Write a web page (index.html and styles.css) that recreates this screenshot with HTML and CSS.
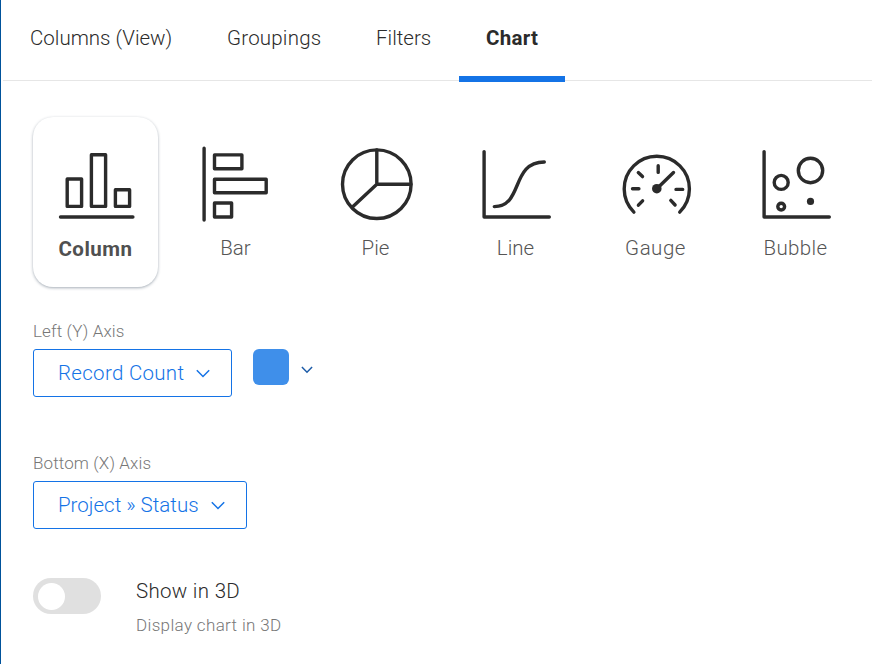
FILE: index.html
```html
<!DOCTYPE html>
<html lang="en">
<head>
<meta charset="utf-8">
<title>Chart settings</title>
<link rel="stylesheet" href="styles.css">
</head>
<body>
<main class="panel">
  <nav class="tabs">
    <a class="tab tab-columns"><span>Columns (View)</span></a>
    <a class="tab tab-groupings"><span>Groupings</span></a>
    <a class="tab tab-filters"><span>Filters</span></a>
    <a class="tab tab-chart active"><span>Chart</span></a>
  </nav>
  <section class="types">
    <div class="type selected">
      <svg class="icon" viewBox="55.5 145 80 80"><path d="M66.7 179h14.4v27.4H66.7zM90.9 154.7h14.2v51.7H90.9zM114.9 189.7h14.2v16.7h-14.2zM60 217h72.4"/></svg>
      <span class="name n-column">Column</span>
    </div>
    <div class="type">
      <svg class="icon" viewBox="195.500 145 80 80"><path d="M203.6 148.3v71.8M214 154.9h27.4v13.9H214zM214 179.3h51.7v13.5H214zM214 203h17.1v14H214z"/></svg>
      <span class="name n-bar">Bar</span>
    </div>
    <div class="type">
      <svg class="icon" viewBox="335.5 145 80 80"><circle cx="376.3" cy="184.2" r="34.3"/><path d="M376.3 150v34.2h34M376.3 184.2l-24.6 23.1"/></svg>
      <span class="name n-pie">Pie</span>
    </div>
    <div class="type">
      <svg class="icon" viewBox="475.5 145 80 80"><path d="M483.6 151.6V217h65.2M493.8 206.6C523 206.6 510 162 543.8 162"/></svg>
      <span class="name n-line">Line</span>
    </div>
    <div class="type">
      <svg class="icon" viewBox="615.5 145 80 80"><path d="M633.4 212.1a32.6 32.6 0 1 1 45.8 0M656.3 188.7l16.7-16.2M657.7 165.7v6.7M637.8 172.6l4.2 4M632 188.7h6.4M637.9 205.2l4.2-4.4M675.5 189.4h6.7M670.3 200.4l4.3 4.6"/><circle class="fill" cx="656.3" cy="188.7" r="4.8"/></svg>
      <span class="name n-gauge">Gauge</span>
    </div>
    <div class="type">
      <svg class="icon" viewBox="755.5 145 80 80"><path d="M763.6 151.6V217h65.2"/><circle cx="780.7" cy="182.4" r="7"/><circle cx="810" cy="170.5" r="12.2"/><circle cx="780.7" cy="206.6" r="3.4"/><circle class="fill" cx="810" cy="201.4" r="3.6"/></svg>
      <span class="name n-bubble">Bubble</span>
    </div>
  </section>
  <section class="field">
    <label class="caption c-left">Left (Y) Axis</label>
    <div class="row">
      <button class="select s-count"><span>Record Count</span><svg class="chev" viewBox="0 0 14 9"><path d="M.8 1.2 7 7.5l6.2-6.3"/></svg></button>
      <div class="swatch"></div>
      <svg class="chev small" viewBox="0 0 12 8"><path d="M.9 1 6 6.2 11.1 1"/></svg>
    </div>
  </section>
  <section class="field second">
    <label class="caption c-bottom">Bottom (X) Axis</label>
    <div class="row">
      <button class="select s-status"><span>Project » Status</span><svg class="chev" viewBox="0 0 14 9"><path d="M.8 1.2 7 7.5l6.2-6.3"/></svg></button>
    </div>
  </section>
  <section class="option">
    <div class="toggle"><div class="knob"></div></div>
    <div class="text">
      <div class="title">Show in 3D</div>
      <div class="hint">Display chart in 3D</div>
    </div>
  </section>
</main>
</body>
</html>
```
FILE: styles.css
```css
* { box-sizing: border-box; }
body { margin: 0; background: #fff; font-family: Roboto, "Liberation Sans", sans-serif; }
.panel { height: 664px; border-left: 1px solid #00529b; overflow: hidden; }
.tabs { display: flex; height: 81px; margin-left: 2px; border-bottom: 1px solid #e6e6e6; }
.tab { height: 82px; padding: 24px 0 0 27px; font-size: 20.5px; line-height: 28px; font-weight: 350; color: #2b2b2b; white-space: nowrap; }
.tab-columns { width: 197px; }
.tab-groupings { width: 149px; letter-spacing: .2px; }
.tab-filters { width: 110px; }
.tab-chart { width: 106px; letter-spacing: .3px; }
.active { font-weight: 700; border-bottom: 6px solid #1473e6; }
.types { display: flex; gap: 15px; margin: 36px 0 0 32px; }
.type { flex: none; width: 125px; height: 170px; padding-top: 28px; display: flex; flex-direction: column; align-items: center; border-radius: 20px; }
.selected { box-shadow: 0 1px 3px rgba(40, 60, 80, .42); }
.icon { width: 80px; height: 80px; fill: none; stroke: #2b2b2b; stroke-width: 3.4; stroke-linecap: round; stroke-linejoin: round; }
.fill { fill: #2b2b2b; stroke: none; }
.name { margin-top: 9px; font-size: 20.5px; line-height: 28px; font-weight: 350; color: #555; }
.n-gauge { letter-spacing: .5px; }
.n-bubble { letter-spacing: .4px; }
.selected .name { margin-top: 10px; font-weight: 700; color: #505050; letter-spacing: .5px; }
.field { margin: 33px 0 0 32px; }
.caption { display: block; width: max-content; height: 29px; font-size: 17px; line-height: 22px; font-weight: 350; color: #777; letter-spacing: .12px; }
.row { display: flex; align-items: flex-start; }
.select { height: 48px; padding: 0 21px 0 24px; display: flex; align-items: center; justify-content: space-between; border: 1px solid #1473e6; border-radius: 3px; background: #fff; color: #1473e6; font: 350 20.5px/28px Roboto, "Liberation Sans", sans-serif; white-space: nowrap; }
.s-count { width: 199px; letter-spacing: .3px; }
.s-status { width: 214px; }
.chev { width: 14px; height: 9px; fill: none; stroke: #1473e6; stroke-width: 1.5; }
.small { width: 12px; height: 8px; margin: 17px 0 0 12px; stroke: #1d5ca8; }
.swatch { width: 36px; height: 36px; margin-left: 21px; border-radius: 6px; background: #3f8fea; }
.second { margin-top: 55px; }
.option { display: flex; margin: 49px 0 0 32px; }
.toggle { width: 68px; height: 36px; padding: 5px; border-radius: 18px; background: #e0e0e0; }
.knob { width: 27px; height: 27px; border-radius: 50%; background: #fff; }
.text { margin: -1px 0 0 35px; }
.title { width: max-content; font-size: 20.5px; line-height: 28px; font-weight: 350; color: #2b2b2b; letter-spacing: .3px; }
.hint { width: max-content; margin-top: 9px; font-size: 17px; line-height: 22px; font-weight: 350; color: #777; letter-spacing: .35px; }
```
